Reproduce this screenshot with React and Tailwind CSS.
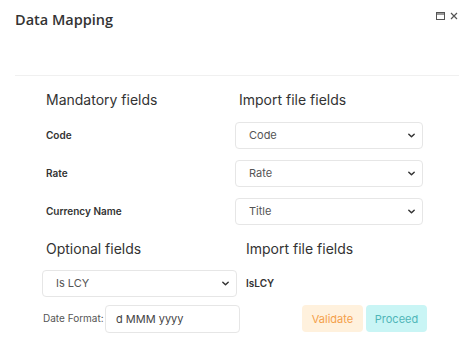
import React from "react";

const Chevron = () => (
  <svg width="9" height="9" viewBox="0 0 10 10" className="shrink-0">
    <path d="M2 3.5 L5 6.5 L8 3.5" fill="none" stroke="#333" strokeWidth="1.6" strokeLinecap="round" strokeLinejoin="round" />
  </svg>
);

function Select({ value, className = "" }) {
  return (
    <div className={`h-[27px] flex items-center justify-between pl-[13px] pr-[6px] border border-[#e6e6e6] rounded-[4px] bg-white ${className}`}>
      <span className="text-[11px] text-[#555]">{value}</span>
      <Chevron />
    </div>
  );
}

export default function App() {
  return (
    <div className="w-[474px] h-[348px] bg-white overflow-hidden font-['Inter',sans-serif]">
      {/* Header */}
      <div className="flex items-start justify-between px-[15px] pt-[9px]">
        <h1 className="font-['Open_Sans',sans-serif] text-[14.5px] font-semibold text-[#333]">
          Data Mapping
        </h1>
        <div className="flex items-center gap-[5px] pt-[3px] pr-[1px]">
          <svg width="9" height="8" viewBox="0 0 9 8">
            <rect x="0.5" y="0.5" width="8" height="7" fill="none" stroke="#555" strokeWidth="1" />
            <line x1="0.5" y1="2" x2="8.5" y2="2" stroke="#555" strokeWidth="1.2" />
          </svg>
          <svg width="8" height="8" viewBox="0 0 8 8">
            <path d="M1 1 L7 7 M7 1 L1 7" stroke="#555" strokeWidth="1.2" />
          </svg>
        </div>
      </div>

      <div className="mx-[15px] mt-[44px] border-t border-[#f0f0f0]" />

      {/* Mandatory */}
      <div className="flex pl-[46px] mt-[13px]">
        <div className="w-[193px] text-[14px] text-[#333] h-[22px] leading-[22px]">Mandatory fields</div>
        <div className="text-[14px] text-[#333] h-[22px] leading-[22px]">Import file fields</div>
      </div>

      <div className="flex flex-col gap-[11px] mt-[11px]">
        {[
          ["Code", "Code"],
          ["Rate", "Rate"],
          ["Currency Name", "Title"],
        ].map(([label, value]) => (
          <div key={label} className="flex items-center">
            <div className="w-[235px] pl-[46px] text-[10px] font-semibold text-[#333]">{label}</div>
            <Select value={value} className="w-[188px]" />
          </div>
        ))}
      </div>

      {/* Optional */}
      <div className="flex mt-[13px]">
        <div className="w-[246px] pl-[46px] text-[14px] text-[#333] h-[22px] leading-[22px]">Optional fields</div>
        <div className="text-[14px] text-[#333] h-[22px] leading-[22px]">Import file fields</div>
      </div>

      <div className="flex items-center mt-[10px]">
        <div className="pl-[42px] w-[246px] pr-[9px]">
          <Select value="Is LCY" className="w-[195px]" />
        </div>
        <div className="text-[10px] font-semibold text-[#333]">IsLCY</div>
      </div>

      <div className="flex items-center mt-[8px] pl-[43px]">
        <span className="text-[10px] text-[#555] w-[62px]">Date Format:</span>
        <div className="w-[135px] h-[28px] border border-[#e6e6e6] rounded-[4px] flex items-center pl-[10px] text-[11px] text-[#444]">
          d MMM yyyy
        </div>
        <div className="flex gap-[3px] ml-[62px]">
          <button className="w-[61px] h-[27px] rounded-[4px] bg-[#fff1dd] text-[11px] text-[#f4a04a]">
            Validate
          </button>
          <button className="w-[61px] h-[27px] rounded-[4px] bg-[#c9f5f5] text-[11px] text-[#4fb6b8]">
            Proceed
          </button>
        </div>
      </div>
    </div>
  );
}
